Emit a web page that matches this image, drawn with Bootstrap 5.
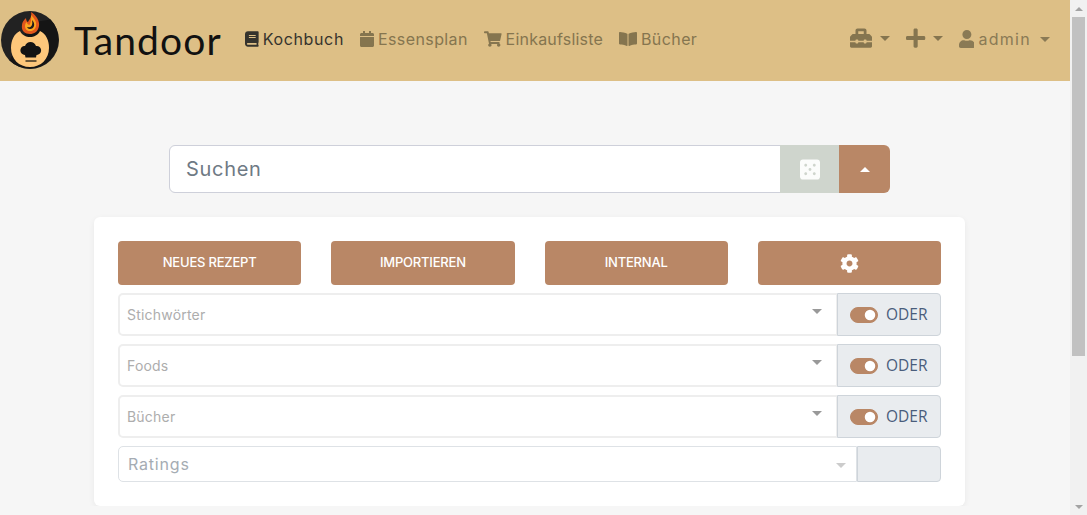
<!DOCTYPE html>
<html lang="de">
<head>
<meta charset="utf-8">
<title>Tandoor</title>
<link href="https://cdn.jsdelivr.net/npm/bootstrap@5.3.0/dist/css/bootstrap.min.css" rel="stylesheet">
<style>
body { background: #f6f6f6; font-family: "Inter", "Liberation Sans", sans-serif; margin-right: 17px; }
.t-nav { background: #ddbf86; height: 81px; padding: 0 12px 0 0; }
.t-brand { display: flex; align-items: center; gap: 14px; width: 237px; padding: 0 0 1px; color: #111; text-decoration: none; font-family: "Lato", sans-serif; font-size: 39px; letter-spacing: 1.1px; line-height: 1; }
.t-brand svg { width: 60px; height: 60px; flex: none; }
.t-nav .nav-link { color: #85754f; font-size: 16px; letter-spacing: .4px; padding: 0 8px 3px; display: flex; align-items: center; gap: 4px; white-space: nowrap; }
.t-nav .nav-link.active { color: #35332d; letter-spacing: .65px; }
.t-nav .nav-link svg { height: 16px; fill: currentColor; display: block; }
.t-nav .nav-link.t-big svg { height: 22px; }
.t-nav .t-user svg { height: 18px; }
.t-nav .t-user { letter-spacing: 1.3px; color: #8a7a55; }
.t-nav .dropdown-toggle::after { margin-left: 5px; border-top-width: 5px; border-left-width: 5px; border-right-width: 5px; }
.t-nav .t-big::after { margin-left: 3px; }
.t-nav .t-tools::after { margin-left: 4px; }
.t-left .nav-item:nth-child(1) { width: 115px; }
.t-left .nav-item:nth-child(2) { width: 124px; }
.t-left .nav-item:nth-child(3) { width: 135px; }
.t-left .nav-item:nth-child(3) .nav-link { letter-spacing: .2px; }
.t-wrap { width: 871px; margin-left: 94px; padding-top: 64px; }
.t-search { width: 721px; margin: 0 75px 24px; height: 48px; }
.t-search .form-control { font-size: 20px; letter-spacing: .7px; height: 48px; border-color: #ced0da; color: #495057; padding-left: 16px; }
.t-search .form-control::placeholder { color: #6f7a85; }
.t-dice { width: 60px; flex: none; background: #cfd5cd; border: 0; border-radius: 0; padding: 0; display: flex; align-items: center; justify-content: center; }
.t-dice:hover { background: #cfd5cd; }
.t-dice svg { width: 20px; height: 23px; fill: #fbfcfb; display: block; }
.t-up { width: 51px; flex: none; background: #b98766; border: 0; padding: 0; display: flex; align-items: center; justify-content: center; }
.t-up:hover { background: #b98766; }
.t-up::after { content: ""; border-left: 5px solid transparent; border-right: 5px solid transparent; border-bottom: 5px solid #fff; }
.t-panel { background: #fff; border-radius: 6px; padding: 24px; box-shadow: 0 2px 6px rgba(0,0,0,.06); height: 289px; }
.t-btn { background: #b98766; color: #fff; border: 0; width: 100%; height: 44px; font-size: 13px; font-weight: 500; letter-spacing: -.2px; padding: 0; display: flex; align-items: center; justify-content: center; border-radius: 4px; }
.t-btn:hover { background: #b98766; color: #fff; }
.t-btn svg { width: 19px; height: 19px; fill: #fff; }
.t-acts { margin-bottom: 8px; --bs-gutter-x: 30px; }
.t-filter { height: 43px; margin-bottom: 8px; flex-wrap: nowrap; }
.t-select { flex: 1 1 auto; display: flex; align-items: center; justify-content: space-between; border: 2px solid #eeeeee; border-right-width: 1px; border-radius: 5px 0 0 5px; background: #fff; color: #adadad; font-size: 14px; letter-spacing: .2px; padding: 0 14px 1px 7px; }
.t-select::after { content: ""; border-left: 5px solid transparent; border-right: 5px solid transparent; border-top: 5px solid #999; margin-top: -5px; }
.t-addon { width: 104px; flex: none; background: #e9ecef; border: 1px solid #ced4da; border-radius: 0 4px 4px 0; display: flex; align-items: center; padding: 0 0 0 12px; gap: 8px; font-family: "Open Sans", sans-serif; font-size: 15.5px; color: #495d7c; }
.t-addon .form-check { margin: 0; padding: 0; min-height: 0; display: flex; }
.t-addon .form-check-input { margin: 0; width: 28px; height: 16px; float: none; background-color: #b98766; border-color: #b98766; box-shadow: none; }
.t-rate { height: 36px; margin: 0; flex-wrap: nowrap; }
.t-rate .t-select { border-width: 1px; border-color: #dee2e6; font-size: 16px; color: #a5acb3; letter-spacing: .8px; padding: 0 10px 0 9px; }
.t-rate .t-select::after { border-top-color: #ccc; margin-top: 2px; }
.t-rate .t-addon { width: 84px; }
.t-scroll { position: fixed; top: 0; right: 0; bottom: 0; width: 17px; background: #f1f1f1; display: flex; flex-direction: column; align-items: center; }
.t-scroll-up, .t-scroll-down { height: 17px; flex: none; display: flex; align-items: center; }
.t-scroll-up::after { content: ""; border-left: 4px solid transparent; border-right: 4px solid transparent; border-bottom: 4px solid #a3a3a3; }
.t-scroll-down::after { content: ""; border-left: 4px solid transparent; border-right: 4px solid transparent; border-top: 4px solid #a3a3a3; }
.t-scroll-thumb { width: 13px; height: 339px; background: #c1c1c1; flex: none; }
.t-scroll-track { flex: 1 1 auto; }
</style>
</head>
<body>
<nav class="navbar navbar-expand t-nav">
  <a class="t-brand" href="#">
    <svg viewBox="0 0 60 60" aria-hidden="true">
      <circle cx="30" cy="30" r="29" fill="#222"/>
      <path d="M50.500 9.500A29 29 0 0 1 9.500 50.500L20 30l15-18z" fill="#151515"/>
      <path d="M11 38c0-8 3-14 9-17 2 4 6 6 10 6s8-2 10-6c6 3 9 9 9 17 0 11-8 19-19 19s-19-8-19-19z" fill="#fdc77b"/>
      <path d="M31 2c5 3 9 9 8 14-1 6-5 8-9 8-5 0-9-3-8-9 0-3 2-5 4-7 0 2 1 4 2 4 2-3 4-6 3-10z" fill="#e2571c"/>
      <path d="M31 5c3 3 6 7 5 11-.5 3-3 5-6 5-3 0-5-2-5-5 0-1 .5-3 1.500-4 .5 2 2 3 3 3 1.500-3 2-6 1.500-10z" fill="#fba51f"/>
      <path d="M32 10c2 2 2.500 4 2 6-.5 2-2 3-4 3-1.500 0-2.500-1-3-2 1 .5 3 .5 4-.5 1.500-1.500 1.500-4 1-6.500z" fill="#1d1d1d"/>
      <path d="M25 45c-3.500-.5-5-3-4.500-5.500.5-2.500 2.500-4 4.500-3.500 1-2.500 3-4 5.500-4s4.500 1.500 5.500 4c2.500-.5 4.500 1 5 3.500.5 2.500-1 5-4.500 5.500l-.5 2.500H25.500z" fill="#141414"/>
      <rect x="25.500" y="50" width="11" height="2" fill="#6b5636"/>
    </svg>
    <span>Tandoor</span>
  </a>
  <ul class="navbar-nav t-left">
    <li class="nav-item"><a class="nav-link active" href="#"><svg viewBox="0 0 448 512"><path d="M448 360V24c0-13.300-10.700-24-24-24H96C43 0 0 43 0 96v320c0 53 43 96 96 96h328c13.300 0 24-10.700 24-24v-16c0-7.500-3.500-14.300-8.900-18.700-4.200-15.400-4.200-59.300 0-74.700 5.400-4.300 8.900-11.100 8.900-18.600zM128 134c0-3.300 2.700-6 6-6h212c3.300 0 6 2.700 6 6v20c0 3.300-2.700 6-6 6H134c-3.300 0-6-2.700-6-6v-20zm0 64c0-3.300 2.700-6 6-6h212c3.300 0 6 2.700 6 6v20c0 3.300-2.700 6-6 6H134c-3.300 0-6-2.700-6-6v-20zm253.400 250H96c-17.700 0-32-14.300-32-32 0-17.600 14.400-32 32-32h285.400c-1.900 17.100-1.900 46.900 0 64z"/></svg>Kochbuch</a></li>
    <li class="nav-item"><a class="nav-link" href="#"><svg viewBox="0 0 448 512"><path d="M12 192h424c6.600 0 12 5.400 12 12v260c0 26.500-21.500 48-48 48H48c-26.500 0-48-21.500-48-48V204c0-6.600 5.400-12 12-12zm436-44v-36c0-26.500-21.500-48-48-48h-48V12c0-6.600-5.400-12-12-12h-40c-6.600 0-12 5.400-12 12v52H160V12c0-6.600-5.400-12-12-12h-40c-6.600 0-12 5.400-12 12v52H48C21.500 64 0 85.500 0 112v36c0 6.600 5.400 12 12 12h424c6.600 0 12-5.400 12-12z"/></svg>Essensplan</a></li>
    <li class="nav-item"><a class="nav-link" href="#"><svg viewBox="0 0 576 512"><path d="M528.120 301.319l47.273-208C578.806 78.301 567.391 64 551.990 64H159.208l-9.166-44.810C147.758 8.021 137.930 0 126.529 0H24C10.745 0 0 10.745 0 24v16c0 13.255 10.745 24 24 24h69.883l70.248 343.435C147.325 417.100 136 435.222 136 456c0 30.928 25.072 56 56 56s56-25.072 56-56c0-15.674-6.447-29.835-16.824-40h209.647C430.447 426.165 424 440.326 424 456c0 30.928 25.072 56 56 56s56-25.072 56-56c0-22.172-12.888-41.332-31.579-50.405l5.517-24.276c3.413-15.018-8.002-29.319-23.403-29.319H218.117l-6.545-32h293.145c11.206 0 20.920-7.754 23.403-18.681z"/></svg>Einkaufsliste</a></li>
    <li class="nav-item"><a class="nav-link" href="#"><svg viewBox="0 0 576 512"><path d="M542.220 32.050c-54.800 3.110-163.720 14.430-230.960 55.590-4.640 2.840-7.270 7.890-7.270 13.170v363.870c0 11.550 12.630 18.850 23.280 13.490 69.180-34.820 169.230-44.320 218.700-46.920 16.890-.89 30.020-14.430 30.020-30.660V62.750c.01-17.710-15.350-31.740-33.770-30.700zM264.730 87.640C197.500 46.480 88.580 35.170 33.780 32.050 15.360 31.010 0 45.040 0 62.750V400.600c0 16.240 13.130 29.780 30.020 30.660 49.490 2.600 149.590 12.110 218.770 46.950 10.620 5.350 23.210-1.940 23.210-13.460V100.630c0-5.290-2.620-10.140-7.270-12.990z"/></svg>Bücher</a></li>
  </ul>
  <ul class="navbar-nav ms-auto">
    <li class="nav-item"><a class="nav-link t-big t-tools dropdown-toggle" href="#" aria-label="Werkzeuge"><svg viewBox="0 0 512 512"><path d="M502.630 214.630l-45.250-45.250c-6-6-14.140-9.370-22.630-9.370H384V80c0-26.510-21.490-48-48-48H176c-26.510 0-48 21.490-48 48v80H77.250c-8.490 0-16.620 3.370-22.630 9.370L9.370 214.630c-6 6-9.370 14.140-9.370 22.630V320h128v-16c0-8.840 7.160-16 16-16h32c8.840 0 16 7.160 16 16v16h128v-16c0-8.840 7.160-16 16-16h32c8.840 0 16 7.160 16 16v16h128v-82.750c0-8.480-3.370-16.620-9.370-22.620zM320 160H192V96h128v64zm64 208c0 8.840-7.160 16-16 16h-32c-8.840 0-16-7.160-16-16v-16H192v16c0 8.840-7.160 16-16 16h-32c-8.840 0-16-7.160-16-16v-16H0v96c0 17.670 14.330 32 32 32h448c17.670 0 32-14.330 32-32v-96H384v16z"/></svg></a></li>
    <li class="nav-item"><a class="nav-link t-big dropdown-toggle" href="#" aria-label="Neu"><svg viewBox="0 0 448 512"><path d="M416 208H272V64c0-17.670-14.330-32-32-32h-32c-17.670 0-32 14.330-32 32v144H32c-17.670 0-32 14.330-32 32v32c0 17.670 14.330 32 32 32h144v144c0 17.670 14.330 32 32 32h32c17.670 0 32-14.330 32-32V304h144c17.670 0 32-14.330 32-32v-32c0-17.670-14.330-32-32-32z"/></svg></a></li>
    <li class="nav-item"><a class="nav-link t-user dropdown-toggle" href="#"><svg viewBox="0 0 448 512"><path d="M224 256c70.700 0 128-57.300 128-128S294.700 0 224 0 96 57.300 96 128s57.300 128 128 128zm89.600 32h-16.700c-22.200 10.200-46.900 16-72.900 16s-50.600-5.800-72.900-16h-16.700C60.200 288 0 348.200 0 422.400V464c0 26.500 21.500 48 48 48h352c26.500 0 48-21.500 48-48v-41.600c0-74.200-60.200-134.400-134.400-134.400z"/></svg>admin</a></li>
  </ul>
</nav>
<main class="t-wrap">
  <div class="input-group t-search">
    <input class="form-control" type="text" placeholder="Suchen">
    <button class="btn t-dice" type="button" aria-label="Zufall"><svg viewBox="0 0 448 512"><path d="M384 32H64C28.650 32 0 60.650 0 96v320c0 35.350 28.650 64 64 64h320c35.350 0 64-28.650 64-64V96c0-35.350-28.650-64-64-64zM128 384c-17.670 0-32-14.330-32-32s14.330-32 32-32 32 14.330 32 32-14.330 32-32 32zm0-192c-17.670 0-32-14.330-32-32s14.330-32 32-32 32 14.330 32 32-14.330 32-32 32zm96 96c-17.670 0-32-14.330-32-32s14.330-32 32-32 32 14.330 32 32-14.330 32-32 32zm96 96c-17.670 0-32-14.330-32-32s14.330-32 32-32 32 14.330 32 32-14.330 32-32 32zm0-192c-17.670 0-32-14.330-32-32s14.330-32 32-32 32 14.330 32 32-14.330 32-32 32z"/></svg></button>
    <button class="btn t-up" type="button" aria-label="Filter"></button>
  </div>
  <section class="t-panel">
    <div class="row t-acts">
      <div class="col-3"><a class="btn t-btn" href="#">NEUES REZEPT</a></div>
      <div class="col-3"><a class="btn t-btn" href="#">IMPORTIEREN</a></div>
      <div class="col-3"><a class="btn t-btn" href="#">INTERNAL</a></div>
      <div class="col-3"><a class="btn t-btn" href="#" aria-label="Einstellungen"><svg viewBox="0 0 512 512"><path d="M487.400 315.700l-42.600-24.600c4.300-23.200 4.300-47 0-70.200l42.600-24.600c4.900-2.800 7.100-8.600 5.500-14-11.100-35.600-30-67.800-54.700-94.600-3.800-4.100-10-5.100-14.800-2.300L380.800 110c-17.900-15.400-38.500-27.300-60.800-35.100V25.800c0-5.600-3.900-10.500-9.400-11.700-36.700-8.200-74.300-7.800-109.200 0-5.500 1.200-9.400 6.100-9.400 11.700V75c-22.200 7.900-42.800 19.800-60.800 35.100L88.700 85.500c-4.900-2.800-11-1.900-14.800 2.300-24.700 26.700-43.600 58.900-54.700 94.600-1.700 5.400.6 11.200 5.500 14L67.300 221c-4.300 23.200-4.300 47 0 70.200l-42.600 24.600c-4.900 2.800-7.100 8.600-5.500 14 11.100 35.600 30 67.800 54.700 94.600 3.800 4.100 10 5.100 14.800 2.300l42.600-24.600c17.900 15.400 38.500 27.300 60.800 35.100v49.200c0 5.600 3.900 10.500 9.400 11.700 36.700 8.200 74.300 7.800 109.200 0 5.500-1.200 9.400-6.100 9.400-11.700v-49.200c22.200-7.900 42.800-19.800 60.800-35.100l42.600 24.600c4.900 2.800 11 1.900 14.800-2.300 24.700-26.700 43.600-58.900 54.700-94.600 1.500-5.500-.7-11.300-5.600-14.100zM256 336c-44.100 0-80-35.900-80-80s35.900-80 80-80 80 35.900 80 80-35.900 80-80 80z"/></svg></a></div>
    </div>
    <div class="d-flex t-filter"><div class="t-select">Stichwörter</div><div class="t-addon"><div class="form-check form-switch"><input class="form-check-input" type="checkbox" checked aria-label="ODER"></div>ODER</div></div>
    <div class="d-flex t-filter"><div class="t-select">Foods</div><div class="t-addon"><div class="form-check form-switch"><input class="form-check-input" type="checkbox" checked aria-label="ODER"></div>ODER</div></div>
    <div class="d-flex t-filter"><div class="t-select">Bücher</div><div class="t-addon"><div class="form-check form-switch"><input class="form-check-input" type="checkbox" checked aria-label="ODER"></div>ODER</div></div>
    <div class="d-flex t-rate"><div class="t-select">Ratings</div><div class="t-addon"></div></div>
  </section>
</main>
<aside class="t-scroll" aria-hidden="true">
  <div class="t-scroll-up"></div>
  <div class="t-scroll-thumb"></div>
  <div class="t-scroll-track"></div>
  <div class="t-scroll-down"></div>
</aside>
<script src="https://cdn.jsdelivr.net/npm/bootstrap@5.3.0/dist/js/bootstrap.bundle.min.js"></script>
</body>
</html>
